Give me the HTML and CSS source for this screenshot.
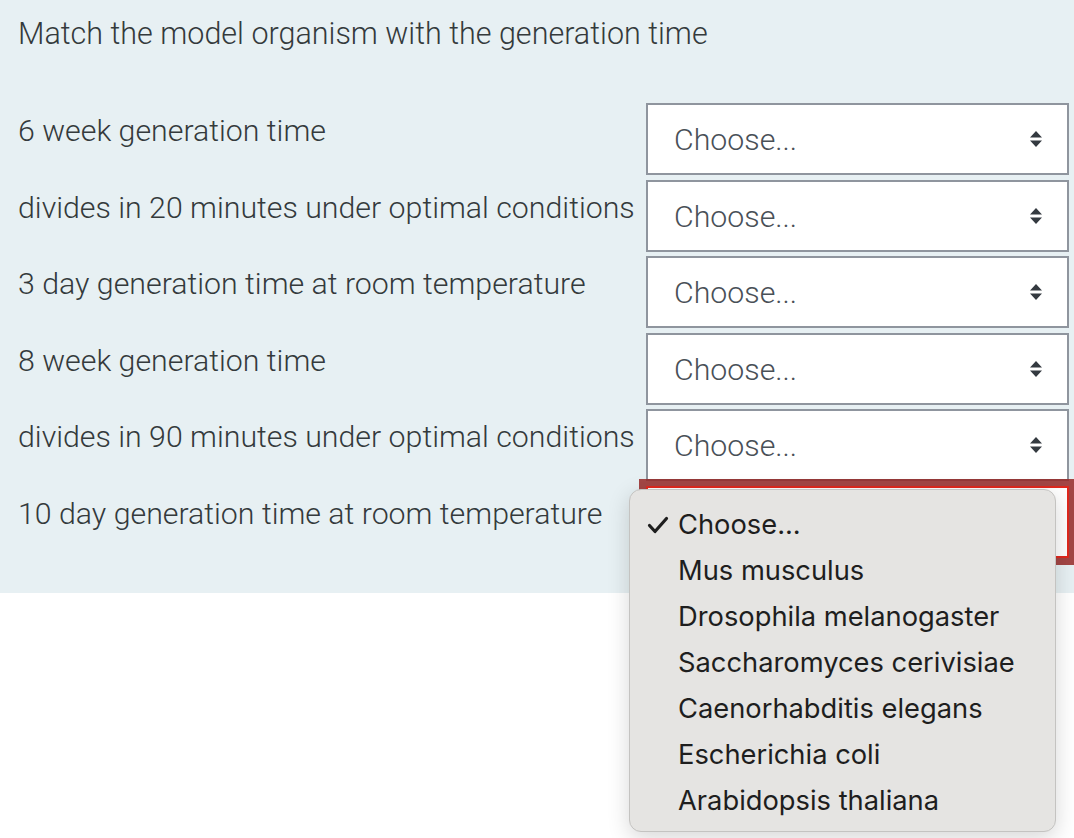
FILE: index.html
```html
<!DOCTYPE html>
<html>
<head>
<meta charset="utf-8">
<link rel="stylesheet" href="styles.css">
</head>
<body>
<div class="panel">
  <div class="title">Match the model organism with the generation time</div>
  <div class="rows">
    <div class="label">6 week generation time</div>
    <div class="select"><span class="value">Choose...</span><svg class="arrows" width="14" height="16" viewBox="0 0 14 16"><path d="M7 0 L13 6.5 L1 6.5 Z M1 9.5 L13 9.5 L7 16 Z" fill="#343a40"/></svg></div>
    <div class="label">divides in 20 minutes under optimal conditions</div>
    <div class="select"><span class="value">Choose...</span><svg class="arrows" width="14" height="16" viewBox="0 0 14 16"><path d="M7 0 L13 6.5 L1 6.5 Z M1 9.5 L13 9.5 L7 16 Z" fill="#343a40"/></svg></div>
    <div class="label">3 day generation time at room temperature</div>
    <div class="select"><span class="value">Choose...</span><svg class="arrows" width="14" height="16" viewBox="0 0 14 16"><path d="M7 0 L13 6.5 L1 6.5 Z M1 9.5 L13 9.5 L7 16 Z" fill="#343a40"/></svg></div>
    <div class="label">8 week generation time</div>
    <div class="select"><span class="value">Choose...</span><svg class="arrows" width="14" height="16" viewBox="0 0 14 16"><path d="M7 0 L13 6.5 L1 6.5 Z M1 9.5 L13 9.5 L7 16 Z" fill="#343a40"/></svg></div>
    <div class="label">divides in 90 minutes under optimal conditions</div>
    <div class="select"><span class="value">Choose...</span><svg class="arrows" width="14" height="16" viewBox="0 0 14 16"><path d="M7 0 L13 6.5 L1 6.5 Z M1 9.5 L13 9.5 L7 16 Z" fill="#343a40"/></svg></div>
    <div class="label">10 day generation time at room temperature</div>
    <div class="select focused">
      <div class="menu">
        <div class="opt selected"><svg class="check" width="22" height="18" viewBox="0 0 22 18"><path d="M2.5 9.5 L8 15.5 L19.5 2.5" fill="none" stroke="#1e1e1e" stroke-width="3.2" stroke-linecap="round" stroke-linejoin="round"/></svg>Choose...</div>
        <div class="opt">Mus musculus</div>
        <div class="opt">Drosophila melanogaster</div>
        <div class="opt">Saccharomyces cerivisiae</div>
        <div class="opt">Caenorhabditis elegans</div>
        <div class="opt">Escherichia coli</div>
        <div class="opt">Arabidopsis thaliana</div>
      </div>
    </div>
  </div>
</div>
</body>
</html>
```

FILE: styles.css
```css
html, body {
  margin: 0;
  padding: 0;
  background: #ffffff;
}
body {
  font-family: Roboto, "Liberation Sans", sans-serif;
  color: #343a3c;
  min-height: 838px;
}
.panel {
  background: #e7f0f3;
  height: 593px;
  box-sizing: border-box;
  padding: 14px 0 0 18px;
}
.title {
  font-size: 30.5px;
  font-weight: 300;
  line-height: 40px;
}
.rows {
  margin-top: 49px;
  display: grid;
  grid-template-columns: 628px 423px;
  row-gap: 4.6px;
}
.label {
  font-size: 30.3px;
  font-weight: 300;
  line-height: 40px;
  padding-top: 8px;
  white-space: nowrap;
}
.select {
  position: relative;
  height: 72px;
  box-sizing: border-box;
  border: 2px solid #8f959e;
  background: #ffffff;
  display: flex;
  align-items: center;
  justify-content: space-between;
  padding: 0 24px 0 26px;
}
.value {
  font-size: 30.3px;
  font-weight: 300;
  color: #495057;
  padding-top: 1px;
}
.arrows {
  display: block;
}
.focused {
  border: 2px solid #e0281e;
  box-shadow: 0 0 0 7px rgba(150, 40, 38, 0.85);
}
.menu {
  position: absolute;
  left: -19px;
  top: 1px;
  width: 427px;
  height: 343px;
  box-sizing: border-box;
  background: #e5e4e2;
  border: 1px solid #c4c3c1;
  border-radius: 12px;
  box-shadow: 0 6px 22px rgba(0, 0, 0, 0.16);
  padding-top: 12px;
  font-family: Inter, "Noto Sans", sans-serif;
  color: #1e1e1e;
  z-index: 2;
}
.opt {
  position: relative;
  height: 46px;
  line-height: 46px;
  padding-left: 48px;
  font-size: 27.3px;
  font-weight: 400;
}
.check {
  position: absolute;
  left: 17px;
  top: 14px;
}
```
